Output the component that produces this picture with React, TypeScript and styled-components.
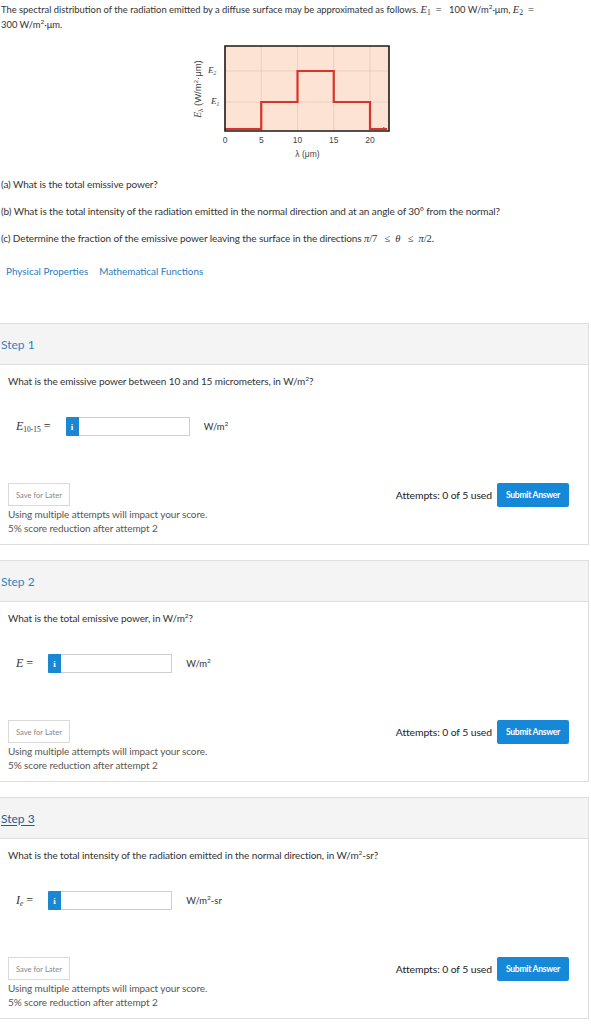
import React from "react";
import styled, { createGlobalStyle } from "styled-components";

const Global = createGlobalStyle`
  html, body { margin: 0; padding: 0; background: #fff; }
  body { font-family: Lato, "Open Sans", sans-serif; color: #333; }
`;

const Page = styled.div`
  width: 591px;
  padding: 2px 0 0 1px;
  box-sizing: border-box;
`;

const Intro = styled.p`
  margin: 0;
  font-size: 9.4px;
  line-height: 15px;
  max-width: 548px;
`;

const Sup = styled.sup`
  font-size: 6.5px;
  line-height: 0;
  vertical-align: 4px;
`;

const M = styled.span`
  font-family: "Liberation Serif", "DejaVu Serif", serif;
  font-style: italic;
  font-size: 10.5px;
`;

const Op = styled.span`
  font-family: "Liberation Serif", "DejaVu Serif", serif;
  font-size: 10.5px;
  margin: 0 5px;
`;

const Figure = styled.div`
  margin: 11px 0 0 187px;
  height: 120px;
`;

const Question = styled.p<{ $top: number }>`
  margin: ${(p) => p.$top}px 0 0 0;
  font-size: 10px;
  line-height: 13px;
  letter-spacing: -0.1px;
`;

const Links = styled.div`
  display: flex;
  gap: 11px;
  margin: 20px 0 0 5px;
  font-size: 9.9px;
  line-height: 13px;
`;

const Link = styled.a`
  color: #2b7bbd;
  text-decoration: none;
`;

const Steps = styled.div`
  display: flex;
  flex-direction: column;
  gap: 15px;
  margin-top: 45px;
  margin-left: -1px;
`;

const Card = styled.section`
  width: 589px;
  border: 1px solid #dedede;
  border-left: none;
  box-sizing: border-box;
  background: #fff;
`;

const Header = styled.div`
  height: 40px;
  background: #f4f4f4;
  border-bottom: 1px solid #dedede;
  display: flex;
  align-items: center;
  padding-left: 1px;
`;

const StepTitle = styled.span<{ $visited?: boolean }>`
  font-size: 12px;
  color: ${(p) => (p.$visited ? "#1d5e94" : "#3382bf")};
  text-decoration: ${(p) => (p.$visited ? "underline" : "none")};
  text-underline-offset: 2px;
`;

const Body = styled.div`
  padding: 10px 19px 9px 8px;
`;

const Prompt = styled.p`
  margin: 0;
  font-size: 10px;
  line-height: 13px;
  letter-spacing: -0.1px;
`;

const InputRow = styled.div`
  display: flex;
  align-items: center;
  margin: 29px 0 0 8px;
  height: 19px;
`;

const MathLabel = styled.span`
  font-family: "Liberation Serif", "DejaVu Serif", serif;
  font-size: 12px;
  margin-right: 15px;
  white-space: nowrap;
`;

const Sub = styled.sub`
  font-size: 7.5px;
  font-style: normal;
  line-height: 0;
  vertical-align: -2px;
`;

const InfoButton = styled.span`
  width: 13px;
  height: 19px;
  background: #1a87d2;
  color: #fff;
  font-family: "Liberation Serif", serif;
  font-weight: bold;
  font-size: 9px;
  display: flex;
  align-items: center;
  justify-content: center;
  border-radius: 1px 0 0 1px;
`;

const Field = styled.input`
  width: 111px;
  height: 19px;
  box-sizing: border-box;
  border: 1px solid #cfcfcf;
  border-left: none;
  margin: 0;
  padding: 0 4px;
  outline: none;
`;

const Unit = styled.span`
  margin-left: 14px;
  font-size: 9.4px;
`;

const Footer = styled.div`
  display: flex;
  justify-content: space-between;
  align-items: flex-start;
  margin-top: 47px;
`;

const LeftCol = styled.div`
  display: flex;
  flex-direction: column;
  align-items: flex-start;
`;

const SaveButton = styled.button`
  height: 23px;
  padding: 0 7px;
  background: #fff;
  border: 1px solid #d9d9d9;
  color: #888;
  font-family: Lato, sans-serif;
  font-size: 7.6px;
  margin-bottom: 1px;
`;

const Note = styled.span`
  font-size: 10px;
  line-height: 14px;
  color: #5a5650;
  letter-spacing: -0.1px;
`;

const RightCol = styled.div`
  display: flex;
  align-items: center;
  gap: 5px;
`;

const Attempts = styled.span`
  font-size: 10.4px;
  color: #222;
  letter-spacing: -0.1px;
`;

const Submit = styled.button`
  height: 24px;
  padding: 0 9px;
  background: #1589d8;
  border: none;
  border-radius: 2px;
  color: #fff;
  font-family: Lato, sans-serif;
  font-weight: bold;
  font-size: 8.6px;
  letter-spacing: -0.3px;
`;

const Chart = () => {
  const x = (v: number) => 37 + v * 7.25;
  const yB = 86;
  const y1 = 59;
  const y2 = 28;
  const tick = { fontFamily: "Liberation Sans, Arial, sans-serif", fontSize: 8.5, fill: "#444" } as const;
  return (
    <svg width="212" height="120" viewBox="0 0 212 120">
      <rect x="37" y="3" width="164" height="85" fill="#fde3d3" />
      {[5, 10, 15, 20].map((v) => (
        <line key={v} x1={x(v)} y1="3" x2={x(v)} y2="88" stroke="#dcc5b8" strokeWidth="0.6" />
      ))}
      <line x1="37" y1={y1} x2="201" y2={y1} stroke="#dcc5b8" strokeWidth="0.6" />
      <line x1="37" y1={y2} x2="201" y2={y2} stroke="#dcc5b8" strokeWidth="0.6" />
      <path
        d={`M37 ${yB} H${x(5)} V${y1} H${x(10)} V${y2} H${x(15)} V${y1} H${x(20)} V${yB} H199`}
        fill="none"
        stroke="#d9342b"
        strokeWidth="2.2"
      />
      <path d={`M195 ${yB - 2} L200 ${yB} L195 ${yB + 1}`} fill="#d9342b" />
      <path d="M37 3 H201 V88 H37 Z" fill="none" stroke="#1d1a18" strokeWidth="1.6" />
      <text x="24" y={y2 + 2} textAnchor="middle" fontFamily="Liberation Serif, serif" fontStyle="italic" fontSize="9" fill="#333">
        E<tspan fontSize="5.5" dy="2">2</tspan>
      </text>
      <text x="27" y={y1 + 2} textAnchor="middle" fontFamily="Liberation Serif, serif" fontStyle="italic" fontSize="9" fill="#333">
        E<tspan fontSize="5.5" dy="2">1</tspan>
      </text>
      <text transform="translate(13 46) rotate(-90)" textAnchor="middle" {...tick} fontSize="9.5">
        <tspan fontFamily="Liberation Serif, serif" fontStyle="italic">E</tspan>
        <tspan fontSize="6.5" dy="2">λ</tspan>
        <tspan dy="-2"> (W/m</tspan>
        <tspan fontSize="6" dy="-3">2</tspan>
        <tspan dy="3">·μm)</tspan>
      </text>
      {[0, 5, 10, 15, 20].map((v) => (
        <text key={v} x={x(v)} y="100" textAnchor="middle" {...tick}>
          {v}
        </text>
      ))}
      <text x={x(10) + 10} y="114" textAnchor="middle" {...tick}>
        λ (μm)
      </text>
    </svg>
  );
};

type StepProps = {
  title: string;
  visited?: boolean;
  prompt: React.ReactNode;
  label: React.ReactNode;
  unit: React.ReactNode;
};

const Step = ({ title, visited, prompt, label, unit }: StepProps) => (
  <Card>
    <Header>
      <StepTitle $visited={visited}>{title}</StepTitle>
    </Header>
    <Body>
      <Prompt>{prompt}</Prompt>
      <InputRow>
        <MathLabel>{label}</MathLabel>
        <InfoButton>i</InfoButton>
        <Field type="text" />
        <Unit>{unit}</Unit>
      </InputRow>
      <Footer>
        <LeftCol>
          <SaveButton>Save for Later</SaveButton>
          <Note>Using multiple attempts will impact your score.</Note>
          <Note>5% score reduction after attempt 2</Note>
        </LeftCol>
        <RightCol>
          <Attempts>Attempts: 0 of 5 used</Attempts>
          <Submit>Submit Answer</Submit>
        </RightCol>
      </Footer>
    </Body>
  </Card>
);

export default function App() {
  return (
    <>
      <Global />
      <Page>
        <Intro>
          The spectral distribution of the radiation emitted by a diffuse surface may be approximated as follows.{" "}
          <M>
            E<Sub>1</Sub>
          </M>
          <Op>=</Op> 100 W/m<Sup>2</Sup>·μm,{" "}
          <M>
            E<Sub>2</Sub>
          </M>
          <Op>=</Op> 300 W/m<Sup>2</Sup>·μm.
        </Intro>
        <Figure>
          <Chart />
        </Figure>
        <Question $top={15}>(a) What is the total emissive power?</Question>
        <Question $top={14}>
          (b) What is the total intensity of the radiation emitted in the normal direction and at an angle of 30° from the normal?
        </Question>
        <Question $top={14}>
          (c) Determine the fraction of the emissive power leaving the surface in the directions{" "}
          <M>π</M>
          <M style={{ fontStyle: "normal" }}>/7</M> <Op>≤</Op>
          <M>θ</M> <Op>≤</Op>
          <M>π</M>
          <M style={{ fontStyle: "normal" }}>/2</M>.
        </Question>
        <Links>
          <Link>Physical Properties</Link>
          <Link>Mathematical Functions</Link>
        </Links>
        <Steps>
          <Step
            title="Step 1"
            prompt={
              <>
                What is the emissive power between 10 and 15 micrometers, in W/m<Sup>2</Sup>?
              </>
            }
            label={
              <>
                <i>E</i>
                <Sub>10-15</Sub> =
              </>
            }
            unit={
              <>
                W/m<Sup>2</Sup>
              </>
            }
          />
          <Step
            title="Step 2"
            prompt={
              <>
                What is the total emissive power, in W/m<Sup>2</Sup>?
              </>
            }
            label={
              <>
                <i>E</i> =
              </>
            }
            unit={
              <>
                W/m<Sup>2</Sup>
              </>
            }
          />
          <Step
            title="Step 3"
            visited
            prompt={
              <>
                What is the total intensity of the radiation emitted in the normal direction, in W/m<Sup>2</Sup>-sr?
              </>
            }
            label={
              <>
                <i>I</i>
                <Sub>
                  <i>e</i>
                </Sub>{" "}
                =
              </>
            }
            unit={
              <>
                W/m<Sup>2</Sup>-sr
              </>
            }
          />
        </Steps>
      </Page>
    </>
  );
}
